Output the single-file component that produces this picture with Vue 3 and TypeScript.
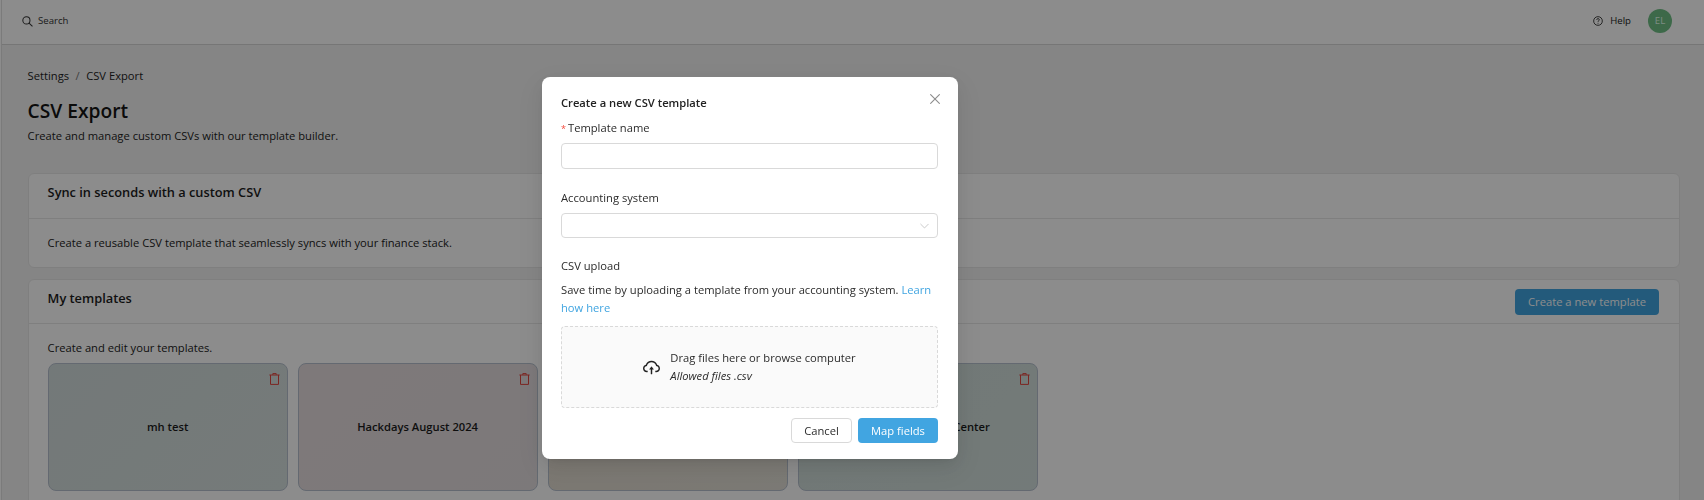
<script setup lang="ts">
interface Tile { name: string; tone: string }
const tiles: Tile[] = [
  { name: 'mh test', tone: 'teal' },
  { name: 'Hackdays August 2024', tone: 'pink' },
  { name: '', tone: 'sand' },
  { name: 'Center', tone: 'green' },
]
</script>

<template>
  <div class="page">
    <div class="rail"></div>
    <div class="main">
      <header class="topbar">
        <div class="search">
          <svg class="search-icon" viewBox="0 0 12 12" width="11" height="11" fill="none" stroke="currentColor" stroke-width="1.1">
            <circle cx="4.8" cy="4.8" r="3.9" />
            <path d="M7.7 7.7 11.4 11.4" />
          </svg>
          <span>Search</span>
        </div>
        <div class="top-right">
          <svg class="help-icon" viewBox="0 0 12 12" width="10" height="10" fill="none" stroke="currentColor" stroke-width="1">
            <path d="M6 .8C9 .8 11.2 3 11.2 6S9 11.2 6 11.2 .8 9 .8 6 3 .8 6 .8Z" />
            <path d="M4.4 4.6C4.5 3.6 5.2 3.1 6 3.1c.9 0 1.6.6 1.6 1.4 0 1.2-1.6 1.2-1.6 2.5" />
            <path d="M6 8.2v1" />
          </svg>
          <span class="help">Help</span>
          <span class="avatar">EL</span>
        </div>
      </header>

      <section class="content">
        <nav class="crumbs"><span>Settings</span><span class="sep">/</span><span>CSV Export</span></nav>
        <h1>CSV Export</h1>
        <p class="lead">Create and manage custom CSVs with our template builder.</p>

        <div class="card first">
          <div class="card-head"><h2>Sync in seconds with a custom CSV</h2></div>
          <div class="card-body"><p>Create a reusable CSV template that seamlessly syncs with your finance stack.</p></div>
        </div>

        <div class="card second">
          <div class="card-head">
            <h2>My templates</h2>
            <button class="create" type="button">Create a new template</button>
          </div>
          <div class="card-body tall">
            <p>Create and edit your templates.</p>
            <div class="tiles">
              <div v-for="(t, i) in tiles" :key="i" class="tile" :class="t.tone">
                <svg class="trash" viewBox="0 0 11 12" width="11" height="12" fill="none" stroke="currentColor" stroke-width="1">
                  <path d="M3.8 1.8V.6h3.4v1.2" />
                  <path d="M.4 2h10.2" />
                  <path d="M1.5 2v9.4h8V2" />
                </svg>
                <span>{{ t.name }}</span>
              </div>
            </div>
          </div>
        </div>
      </section>
    </div>

    <div class="overlay">
      <div class="modal">
        <svg class="close" viewBox="0 0 10 10" width="10" height="10" fill="none" stroke="currentColor" stroke-width="1.1">
          <path d="M.3.3 9.7 9.7M9.7.3.3 9.7" />
        </svg>
        <h3>Create a new CSV template</h3>
        <label class="field-label name-label"><span class="req">*</span>Template name</label>
        <div class="input"></div>
        <label class="field-label acct-label">Accounting system</label>
        <div class="input select">
          <svg viewBox="0 0 10 6" width="9" height="6" fill="none" stroke="currentColor" stroke-width=".9">
            <path d="M.5.7 5 5.2 9.5.7" />
          </svg>
        </div>
        <label class="field-label upload-label">CSV upload</label>
        <p class="hint">Save time by uploading a template from your accounting system. <a>Learn how here</a></p>
        <div class="drop">
          <svg class="cloud" viewBox="64 64 896 896" width="17" height="17" fill="currentColor">
            <path d="M518.3 459a8 8 0 00-12.6 0l-112 141.7a7.98 7.98 0 006.3 12.9h73.9V856c0 4.4 3.6 8 8 8h60c4.4 0 8-3.6 8-8V613.7H624c6.7 0 10.4-7.7 6.3-12.9L518.3 459z" />
            <path d="M811.4 366.7C765.6 245.9 648.9 160 512.2 160S258.8 245.8 213 366.6C127.3 389.1 64 467.2 64 560c0 110.5 89.5 200 199.9 200H304c4.4 0 8-3.6 8-8v-60c0-4.4-3.6-8-8-8h-40.1c-33.7 0-65.4-13.4-89-37.7-23.5-24.2-36-56.8-35-90.6.8-26.4 9.8-51.2 26.2-72.1 16.8-21.4 40.3-37 66.1-43.9l37.9-9.9 13.9-36.6c8.6-22.8 20.6-44.1 35.7-63.4a245.6 245.6 0 0152.4-49.9c41.1-28.9 89.5-44.2 140-44.2s98.9 15.3 140 44.2c19.9 14 37.5 30.8 52.4 49.9 15.1 19.3 27.1 40.6 35.7 63.4l13.8 36.5 37.8 10C846.1 454.5 884 503.8 884 560c0 33.1-12.9 64.3-36.3 87.7a123.07 123.07 0 01-87.6 36.3H720c-4.4 0-8 3.6-8 8v60c0 4.4 3.6 8 8 8h40.1C870.5 760 960 670.5 960 560c0-92.7-63.1-170.7-148.6-193.3z" />
          </svg>
          <div class="drop-text">
            <div>Drag files here or browse computer</div>
            <em>Allowed files .csv</em>
          </div>
        </div>
        <div class="actions">
          <button class="btn cancel" type="button">Cancel</button>
          <button class="btn primary" type="button">Map fields</button>
        </div>
      </div>
    </div>
  </div>
</template>

<style>
html, body { margin: 0; background: #f5f5f5; }
</style>

<style scoped>
* { box-sizing: border-box; }
.page {
  position: relative;
  display: flex;
  width: 1704px;
  height: 500px;
  overflow: hidden;
  font-family: "Open Sans", "Liberation Sans", sans-serif;
  font-size: 11.2px;
  line-height: 18px;
  color: #222;
  background: #f3f3f3;
}
.rail { width: 2px; flex: none; background: #fff; border-right: 1px solid #e0e0e0; }
.main { flex: 1; min-width: 0; }
.topbar {
  display: flex;
  align-items: center;
  justify-content: space-between;
  height: 45px;
  padding: 0 32px 2px 20px;
  background: #fff;
  border-bottom: 1px solid #d8d8d8;
}
.search { display: flex; align-items: center; gap: 5px; font-size: 9.6px; color: #333; }
.top-right { display: flex; align-items: center; color: #222; }
.help { margin-left: 7px; font-size: 9.6px; }
.avatar {
  display: flex;
  align-items: center;
  justify-content: center;
  width: 24px;
  height: 24px;
  margin-left: 17px;
  border-radius: 50%;
  background: #6fbf85;
  color: #e2ffee;
  font-size: 9.6px;
}
.content { padding: 22px 24px 0 25.6px; }
.crumbs { display: flex; gap: 6.5px; height: 18px; color: #222; }
.sep { color: #777; }
h1 { margin: 12px 0 0; font-size: 19.2px; line-height: 28px; font-weight: 600; color: #141414; }
.lead { margin: 2px 0 0; line-height: 18px; color: #222; }
.card {
  margin-top: 11px;
  background: #fff;
  border: 1px solid #e8e8e8;
  border-radius: 6px;
}
.card.first { margin-top: 28px; }
.card-head {
  display: flex;
  align-items: center;
  justify-content: space-between;
  height: 45px;
  padding: 0 20px 0 19px;
  border-bottom: 1px solid #e8e8e8;
}
.second .card-head { height: 44px; }
h2 { margin: 0 0 8px; font-size: 12.8px; line-height: 20px; font-weight: 600; color: #1c1c1c; }
.card-body { height: 48px; padding: 15px 19px 0; }
.card-body.tall { height: 220px; }
.card-body p { margin: 0; color: #222; }
.create {
  height: 26px;
  width: 144px;
  padding: 0;
  border: 0;
  border-radius: 4px;
  background: #41a5e1;
  color: #fff;
  font: inherit;
}
.tiles { display: flex; gap: 10px; margin-top: 6px; }
.tile {
  position: relative;
  display: flex;
  align-items: center;
  justify-content: center;
  width: 240px;
  height: 128px;
  border: 1px solid #b6c0ce;
  border-radius: 8px;
  font-weight: 600;
  color: #1a1a1a;
}
.tile.teal { background: linear-gradient(135deg, #d2dcdc, #d6e0de); }
.tile.pink { background: linear-gradient(135deg, #e6dcdf, #e2dddf); }
.tile.sand { background: linear-gradient(135deg, #e2dace, #e2dfd6); }
.tile.green { background: linear-gradient(135deg, #cfdcd8, #d2dfdc); }
.tile.green span { padding-left: 108px; }
.trash { position: absolute; top: 9px; right: 7px; color: #e0443c; }
.overlay {
  position: absolute;
  inset: 0;
  padding: 77px 0 0 542px;
  background: rgba(0, 0, 0, 0.45);
  backdrop-filter: blur(0.7px);
}
.modal {
  position: relative;
  width: 416px;
  height: 382px;
  padding: 17px 20px 0 19px;
  background: #fff;
  border-radius: 8px;
  box-shadow: 0 6px 16px rgba(0, 0, 0, 0.08), 0 3px 6px -4px rgba(0, 0, 0, 0.12), 0 9px 28px 8px rgba(0, 0, 0, 0.05);
}
.close { position: absolute; top: 17px; right: 18px; color: #8c8c8c; }
h3 { margin: 0; font-size: 11.2px; line-height: 18px; font-weight: 600; color: #222; }
.field-label { display: block; color: #2b2b2b; line-height: 18px; }
.name-label { margin-top: 7px; }
.req { margin-right: 2px; font-size: 9px; color: #f5483b; }
.input {
  height: 26px;
  margin-top: 5px;
  border: 1px solid #d9d9d9;
  border-radius: 4px;
  background: #fff;
}
.acct-label { margin-top: 20px; }
.select {
  display: flex;
  align-items: center;
  justify-content: flex-end;
  height: 25px;
  margin-top: 6px;
  padding-right: 8px;
  color: #bfbfbf;
}
.upload-label { margin-top: 19px; }
.hint { margin: 6px 0 0; color: #2b2b2b; }
.hint a { color: #41a5e1; }
.drop {
  display: flex;
  align-items: center;
  justify-content: center;
  gap: 10px;
  height: 82px;
  margin-top: 9px;
  border: 1px dashed #d9d9d9;
  border-radius: 4px;
  background: #fafafa;
  color: #2b2b2b;
}
.cloud { color: #222; }
.drop-text em { display: block; font-style: italic; }
.actions { display: flex; justify-content: flex-end; gap: 6px; margin-top: 10px; }
.btn {
  height: 25px;
  padding: 0;
  border-radius: 4px;
  font: inherit;
}
.cancel { width: 61px; background: #fff; border: 1px solid #d9d9d9; color: #2b2b2b; }
.primary { width: 80px; background: #41a5e1; border: 0; color: #fff; }
</style>
